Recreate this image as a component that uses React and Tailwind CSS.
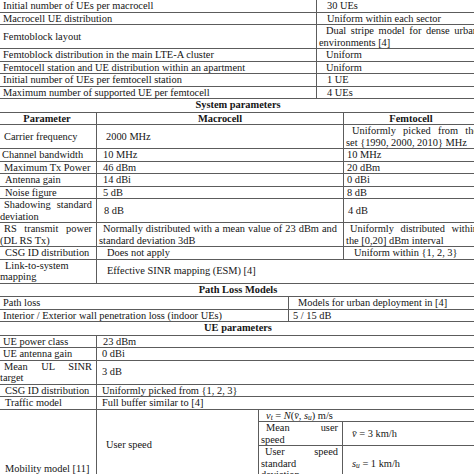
import React from "react";

const FONT = { fontFamily: '"Liberation Serif", "Times New Roman", serif' };
const TBL = "w-full table-fixed border-collapse text-[10.4px] leading-[11.5px] text-[#151515] font-normal";
const B = "border border-[#5c5c5c]";
const td = `${B} px-[2px] py-0 align-middle font-normal text-left`;

function J({ children, indent = "" }) {
  return (
    <span className={`block text-justify [text-align-last:justify] ${indent}`}>
      {children}
    </span>
  );
}
function L({ children, indent = "" }) {
  return <span className={`block ${indent}`}>{children}</span>;
}

function Title({ children }) {
  return (
    <div
      style={FONT}
      className={`${B} border-t-0 h-[13.5px] text-[10.4px] leading-[12.5px] text-[#151515] text-center font-bold`}
    >
      {children}
    </div>
  );
}

function Sub({ children }) {
  return (
    <sub className="text-[7.5px]">
      <i>{children}</i>
    </sub>
  );
}

export default function App() {
  return (
    <div className="w-[474px] h-[474px] overflow-hidden bg-white">
      <div
        className="w-[482px] -ml-[3px] -mt-[1px] text-[10.4px] leading-[11.5px] text-[#151515]"
        style={FONT}
      >
        {/* General */}
        <table className={TBL} style={FONT}>
          <colgroup>
            <col className="w-[319px]" />
            <col />
          </colgroup>
          <tbody>
            <tr>
              <td className={`${td} pl-[5px]`}>Initial number of UEs per macrocell</td>
              <td className={`${td} pl-[10px]`}>30 UEs</td>
            </tr>
            <tr>
              <td className={`${td} pl-[5px]`}>Macrocell UE distribution</td>
              <td className={`${td} pl-[10px]`}>Uniform within each sector</td>
            </tr>
            <tr>
              <td className={`${td} pl-[5px]`}>Femtoblock layout</td>
              <td className={`${td} pr-[0px]`}>
                <J indent="indent-[7px]">Dual stripe model for dense urban</J>
                <L>environments [4]</L>
              </td>
            </tr>
            <tr>
              <td className={`${td} pl-[5px]`}>Femtoblock distribution in the main LTE-A cluster</td>
              <td className={`${td} pl-[9px]`}>Uniform</td>
            </tr>
            <tr>
              <td className={`${td} pl-[5px]`}>Femtocell station and UE distribution within an apartment</td>
              <td className={`${td} pl-[9px]`}>Uniform</td>
            </tr>
            <tr>
              <td className={`${td} pl-[5px]`}>Initial number of UEs per femtocell station</td>
              <td className={`${td} pl-[10px]`}>1 UE</td>
            </tr>
            <tr>
              <td className={`${td} pl-[5px]`}>Maximum number of supported UE per femtocell</td>
              <td className={`${td} pl-[10px]`}>4 UEs</td>
            </tr>
          </tbody>
        </table>

        <Title>System parameters</Title>

        {/* System parameters */}
        <table className={TBL} style={FONT}>
          <colgroup>
            <col className="w-[99px]" />
            <col className="w-[247px]" />
            <col />
          </colgroup>
          <tbody>
            <tr>
              <th className={`${B} border-t-0 px-0 font-bold text-center`}>Parameter</th>
              <th className={`${B} border-t-0 px-0 font-bold text-center`}>Macrocell</th>
              <th className={`${B} border-t-0 px-0 font-bold text-center`}>Femtocell</th>
            </tr>
            <tr>
              <td className={`${td} pl-[6px]`}>Carrier frequency</td>
              <td className={`${td} pl-[9px]`}>2000 MHz</td>
              <td className={`${td} pr-0`}>
                <J indent="indent-[6px]">Uniformly picked from the</J>
                <L>set {"{"}1990, 2000, 2010{"}"} MHz</L>
              </td>
            </tr>
            <tr>
              <td className={`${td} pl-[4px]`}>Channel bandwidth</td>
              <td className={`${td} pl-[6px]`}>10 MHz</td>
              <td className={`${td} pl-[3px]`}>10 MHz</td>
            </tr>
            <tr>
              <td className={`${td} pl-[6px]`}>Maximum Tx Power</td>
              <td className={`${td} pl-[6px]`}>46 dBm</td>
              <td className={`${td} pl-[3px]`}>20 dBm</td>
            </tr>
            <tr>
              <td className={`${td} pl-[7px]`}>Antenna gain</td>
              <td className={`${td} pl-[6px]`}>14 dBi</td>
              <td className={`${td} pl-[3px]`}>0 dBi</td>
            </tr>
            <tr>
              <td className={`${td} pl-[7px]`}>Noise figure</td>
              <td className={`${td} pl-[6px]`}>5 dB</td>
              <td className={`${td} pl-[3px]`}>8 dB</td>
            </tr>
            <tr>
              <td className={`${td} pr-[4px]`}>
                <J indent="indent-[4px]">Shadowing standard</J>
                <L>deviation</L>
              </td>
              <td className={`${td} pl-[7px]`}>8 dB</td>
              <td className={`${td} pl-[4px]`}>4 dB</td>
            </tr>
            <tr>
              <td className={`${td} pr-[4px]`}>
                <J indent="indent-[4px]">RS transmit power</J>
                <L>(DL RS Tx)</L>
              </td>
              <td className={`${td} pr-[6px]`}>
                <J indent="indent-[4px]">Normally distributed with a mean value of 23 dBm and</J>
                <L>standard deviation 3dB</L>
              </td>
              <td className={`${td} pr-0`}>
                <J indent="indent-[4px]">Uniformly distributed within</J>
                <L>the [0,20] dBm interval</L>
              </td>
            </tr>
            <tr>
              <td className={`${td} pl-[7px]`}>CSG ID distribution</td>
              <td className={`${td} pl-[10px]`}>Does not apply</td>
              <td className={`${td} pl-[10px]`}>Uniform within {"{"}1, 2, 3{"}"}</td>
            </tr>
            <tr>
              <td className={td}>
                <L indent="indent-[5px]">Link-to-system</L>
                <L>mapping</L>
              </td>
              <td className={`${td} pl-[10px]`} colSpan={2}>
                Effective SINR mapping (ESM) [4]
              </td>
            </tr>
          </tbody>
        </table>

        <Title>Path Loss Models</Title>

        <table className={TBL} style={FONT}>
          <colgroup>
            <col className="w-[291px]" />
            <col />
          </colgroup>
          <tbody>
            <tr>
              <td className={`${td} border-t-0 pl-[5px]`}>Path loss</td>
              <td className={`${td} border-t-0 pl-[9px]`}>Models for urban deployment in [4]</td>
            </tr>
            <tr>
              <td className={`${td} pl-[5px]`}>Interior / Exterior wall penetration loss (indoor UEs)</td>
              <td className={`${td} pl-[4px]`}>5 / 15 dB</td>
            </tr>
          </tbody>
        </table>

        <Title>UE parameters</Title>

        <table className={TBL} style={FONT}>
          <colgroup>
            <col className="w-[99px]" />
            <col className="w-[162px]" />
            <col className="w-[84px]" />
            <col />
          </colgroup>
          <tbody>
            <tr>
              <td className={`${td} border-t-0 pl-[5px]`}>UE power class</td>
              <td className={`${td} border-t-0 pl-[6px]`} colSpan={3}>23 dBm</td>
            </tr>
            <tr>
              <td className={`${td} pl-[5px]`}>UE antenna gain</td>
              <td className={`${td} pl-[5px]`} colSpan={3}>0 dBi</td>
            </tr>
            <tr>
              <td className={`${td} pr-[4px]`}>
                <J indent="indent-[4px]">Mean UL SINR</J>
                <L>target</L>
              </td>
              <td className={`${td} pl-[5px]`} colSpan={3}>3 dB</td>
            </tr>
            <tr>
              <td className={`${td} pl-[7px]`}>CSG ID distribution</td>
              <td className={`${td} pl-[5px]`} colSpan={3}>Uniformly picked from {"{"}1, 2, 3{"}"}</td>
            </tr>
            <tr>
              <td className={`${td} pl-[7px]`}>Traffic model</td>
              <td className={`${td} pl-[5px]`} colSpan={3}>Full buffer similar to [4]</td>
            </tr>
            <tr>
              <td className={`${td} pl-[7px]`} rowSpan={4}>Mobility model [11]</td>
              <td className={`${td} pl-[9px]`} rowSpan={3}>User speed</td>
              <td className={`${td} pl-[7px]`} colSpan={2}>
                <i>v</i><Sub>t</Sub> = <i>N</i>(<i>v&#772;</i>, <i>s</i><Sub>u</Sub>) m/s
              </td>
            </tr>
            <tr>
              <td className={`${td} pr-[4px]`}>
                <J indent="indent-[5px]">Mean user</J>
                <L>speed</L>
              </td>
              <td className={`${td} pl-[9px]`}>
                <i>v&#772;</i> = 3 km/h
              </td>
            </tr>
            <tr>
              <td className={`${td} pr-[4px]`}>
                <J indent="indent-[4px]">User speed</J>
                <L>standard</L>
                <L>deviation</L>
              </td>
              <td className={`${td} pl-[9px]`}>
                <i>s</i><Sub>u</Sub> = 1 km/h
              </td>
            </tr>
            <tr>
              <td className={`${td} pl-[9px] h-[48px]`}>User direction</td>
              <td className={`${td} pl-[7px] h-[48px]`} colSpan={2}>Uniformly distributed</td>
            </tr>
          </tbody>
        </table>
      </div>
    </div>
  );
}
